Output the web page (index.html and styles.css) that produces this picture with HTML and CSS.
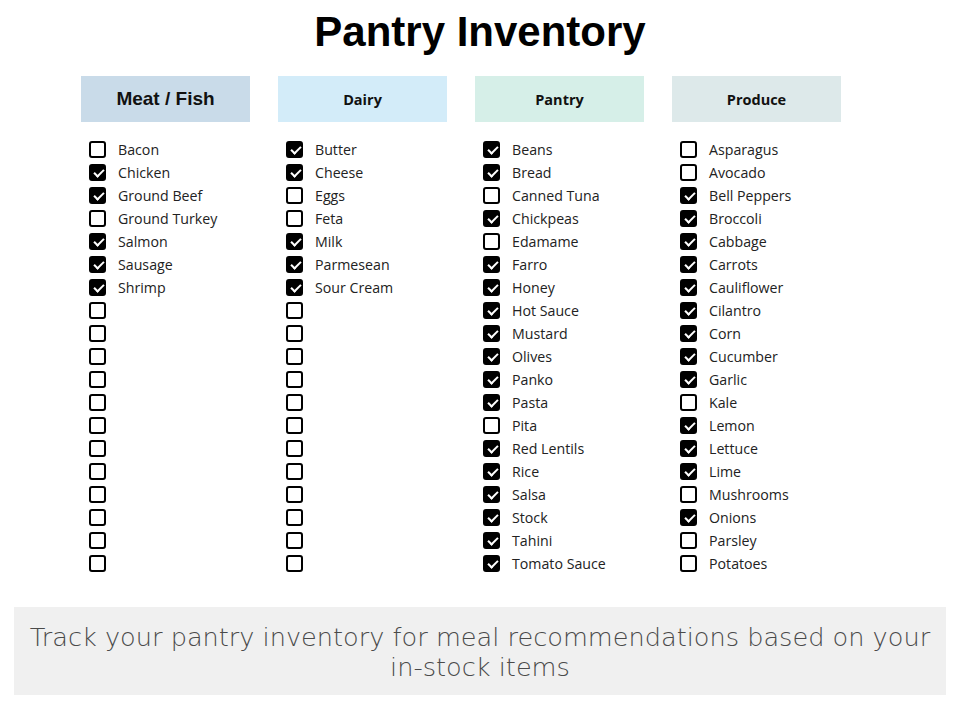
FILE: index.html
```html
<!DOCTYPE html>
<html>
<head>
<meta charset="utf-8">
<link rel="stylesheet" href="styles.css">
</head>
<body>
<h1 class="title">Pantry Inventory</h1>
<div class="columns">
  <section class="col">
    <div class="head head-meat">Meat / Fish</div>
    <ul class="list">
      <li><span class="cb"></span>Bacon</li>
      <li><span class="cb on"></span>Chicken</li>
      <li><span class="cb on"></span>Ground Beef</li>
      <li><span class="cb"></span>Ground Turkey</li>
      <li><span class="cb on"></span>Salmon</li>
      <li><span class="cb on"></span>Sausage</li>
      <li><span class="cb on"></span>Shrimp</li>
      <li><span class="cb"></span></li>
      <li><span class="cb"></span></li>
      <li><span class="cb"></span></li>
      <li><span class="cb"></span></li>
      <li><span class="cb"></span></li>
      <li><span class="cb"></span></li>
      <li><span class="cb"></span></li>
      <li><span class="cb"></span></li>
      <li><span class="cb"></span></li>
      <li><span class="cb"></span></li>
      <li><span class="cb"></span></li>
      <li><span class="cb"></span></li>
    </ul>
  </section>
  <section class="col">
    <div class="head head-dairy">Dairy</div>
    <ul class="list">
      <li><span class="cb on"></span>Butter</li>
      <li><span class="cb on"></span>Cheese</li>
      <li><span class="cb"></span>Eggs</li>
      <li><span class="cb"></span>Feta</li>
      <li><span class="cb on"></span>Milk</li>
      <li><span class="cb on"></span>Parmesean</li>
      <li><span class="cb on"></span>Sour Cream</li>
      <li><span class="cb"></span></li>
      <li><span class="cb"></span></li>
      <li><span class="cb"></span></li>
      <li><span class="cb"></span></li>
      <li><span class="cb"></span></li>
      <li><span class="cb"></span></li>
      <li><span class="cb"></span></li>
      <li><span class="cb"></span></li>
      <li><span class="cb"></span></li>
      <li><span class="cb"></span></li>
      <li><span class="cb"></span></li>
      <li><span class="cb"></span></li>
    </ul>
  </section>
  <section class="col">
    <div class="head head-pantry">Pantry</div>
    <ul class="list">
      <li><span class="cb on"></span>Beans</li>
      <li><span class="cb on"></span>Bread</li>
      <li><span class="cb"></span>Canned Tuna</li>
      <li><span class="cb on"></span>Chickpeas</li>
      <li><span class="cb"></span>Edamame</li>
      <li><span class="cb on"></span>Farro</li>
      <li><span class="cb on"></span>Honey</li>
      <li><span class="cb on"></span>Hot Sauce</li>
      <li><span class="cb on"></span>Mustard</li>
      <li><span class="cb on"></span>Olives</li>
      <li><span class="cb on"></span>Panko</li>
      <li><span class="cb on"></span>Pasta</li>
      <li><span class="cb"></span>Pita</li>
      <li><span class="cb on"></span>Red Lentils</li>
      <li><span class="cb on"></span>Rice</li>
      <li><span class="cb on"></span>Salsa</li>
      <li><span class="cb on"></span>Stock</li>
      <li><span class="cb on"></span>Tahini</li>
      <li><span class="cb on"></span>Tomato Sauce</li>
    </ul>
  </section>
  <section class="col">
    <div class="head head-produce">Produce</div>
    <ul class="list">
      <li><span class="cb"></span>Asparagus</li>
      <li><span class="cb"></span>Avocado</li>
      <li><span class="cb on"></span>Bell Peppers</li>
      <li><span class="cb on"></span>Broccoli</li>
      <li><span class="cb on"></span>Cabbage</li>
      <li><span class="cb on"></span>Carrots</li>
      <li><span class="cb on"></span>Cauliflower</li>
      <li><span class="cb on"></span>Cilantro</li>
      <li><span class="cb on"></span>Corn</li>
      <li><span class="cb on"></span>Cucumber</li>
      <li><span class="cb on"></span>Garlic</li>
      <li><span class="cb"></span>Kale</li>
      <li><span class="cb on"></span>Lemon</li>
      <li><span class="cb on"></span>Lettuce</li>
      <li><span class="cb on"></span>Lime</li>
      <li><span class="cb"></span>Mushrooms</li>
      <li><span class="cb on"></span>Onions</li>
      <li><span class="cb"></span>Parsley</li>
      <li><span class="cb"></span>Potatoes</li>
    </ul>
  </section>
</div>
<footer class="note">Track your pantry inventory for meal recommendations based on your in-stock items</footer>
</body>
</html>
```
FILE: styles.css
```css
html, body {
  margin: 0;
  padding: 0;
  background: #ffffff;
}
body {
  width: 960px;
  height: 720px;
  overflow: hidden;
  font-family: "Open Sans", "Liberation Sans", sans-serif;
  color: #222;
}
.title {
  margin: 0;
  height: 76px;
  box-sizing: border-box;
  padding-top: 7px;
  text-align: center;
  font-family: "Liberation Sans", Arial, sans-serif;
  font-weight: bold;
  font-size: 42px;
  line-height: 50px;
  color: #000;
}
.columns {
  display: flex;
  gap: 28px;
  padding-left: 81px;
}
.col {
  width: 169px;
}
.head {
  height: 46px;
  display: flex;
  align-items: center;
  justify-content: center;
  font-family: "Open Sans", "Liberation Sans", sans-serif;
  font-weight: bold;
  font-size: 14.5px;
  color: #111;
}
.head-meat {
  background: #c9dbe9;
  font-family: "Liberation Sans", Arial, sans-serif;
  font-size: 19px;
}
.head-dairy { background: #d3ecf9; }
.head-pantry { background: #d6efe8; }
.head-produce { background: #dde9ea; }
.list {
  list-style: none;
  margin: 16px 0 0 0;
  padding: 0 0 0 8px;
}
.list li {
  height: 23px;
  display: flex;
  align-items: center;
  gap: 12px;
  font-size: 14.2px;
  color: #222;
  white-space: nowrap;
}
.cb {
  flex: none;
  position: relative;
  width: 17px;
  height: 17px;
  box-sizing: border-box;
  border: 2px solid #000;
  border-radius: 3px;
  background: #fff;
}
.cb.on {
  background: #000;
}
.cb.on::after {
  content: "";
  position: absolute;
  left: 4.5px;
  top: 0.5px;
  width: 4px;
  height: 8px;
  border-right: 2px solid #fff;
  border-bottom: 2px solid #fff;
  transform: rotate(45deg);
}
.note {
  margin: 32px 14px 0 14px;
  height: 88px;
  box-sizing: border-box;
  padding-top: 15px;
  background: #f0f0f0;
  text-align: center;
  font-family: "DejaVu Sans", sans-serif;
  font-weight: 200;
  font-size: 25.6px;
  line-height: 30px;
  color: #4a4a4a;
}
```
